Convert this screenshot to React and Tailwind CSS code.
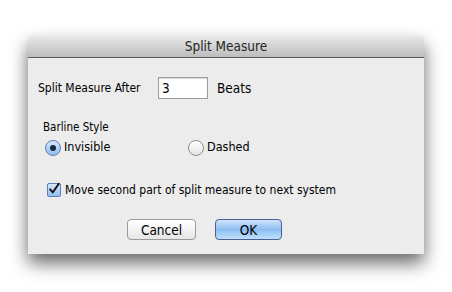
import React from 'react';

const font = { fontFamily: '"DejaVu Sans Condensed", "DejaVu Sans", "Liberation Sans", sans-serif' };

const Radio = ({ checked, label }) => (
  <label className="flex items-center gap-[3px]">
    <span
      className={
        'flex h-[16px] w-[16px] items-center justify-center rounded-full border ' +
        (checked
          ? 'border-[#5a7fb0] bg-gradient-to-b from-[#d7e8fb] to-[#8fbdef]'
          : 'border-[#8e8e8e] bg-gradient-to-b from-[#ffffff] to-[#e4e4e4]')
      }
    >
      {checked && <span className="h-[6px] w-[6px] rounded-full bg-[#1a2a40]" />}
    </span>
    <span className="text-[12.5px] text-black">{label}</span>
  </label>
);

const App = () => {
  return (
    <div className="flex h-[292px] w-[452px] items-start justify-center bg-white pt-[36px]" style={font}>
      <div className="w-[396px] overflow-hidden rounded-t-[4px] bg-[#ececec] shadow-[0_9px_18px_rgba(0,0,0,0.6)]">
        <div className="flex h-[22px] items-center justify-center border-b border-[#595959] bg-gradient-to-b from-[#e9e9e9] to-[#bdbdbd] text-[13.5px] text-[#262626]">
          Split Measure
        </div>
        <div className="px-[10px] pb-[14px] pt-[19px]">
          <div className="flex items-center">
            <span className="w-[120px] text-[12px] text-black">Split Measure After</span>
            <div className="flex h-[22px] w-[50px] items-center border border-[#9b9b9b] bg-white pl-[3px] text-[13.5px] shadow-[inset_0_1px_1px_rgba(0,0,0,0.15)]">
              3
            </div>
            <span className="ml-[9px] text-[13.5px] text-black">Beats</span>
          </div>

          <div className="mt-[20px] pl-[5px] text-[11.5px] text-black">Barline Style</div>
          <div className="mt-[2px] flex pl-[7px]">
            <div className="w-[143px]">
              <Radio checked label="Invisible" />
            </div>
            <Radio label="Dashed" />
          </div>

          <label className="mt-[24px] flex items-center gap-[4px] pl-[9px]">
            <span className="flex h-[14px] w-[14px] items-center justify-center rounded-[2px] border border-[#5a7fb0] bg-gradient-to-b from-[#d7e8fb] to-[#8fbdef]">
              <svg viewBox="0 0 14 14" className="h-[16px] w-[16px] -mt-[3px]">
                <path d="M2.5 7.5 L5.5 11 L12.5 1" fill="none" stroke="#111" strokeWidth="2.2" strokeLinecap="round" strokeLinejoin="round" />
              </svg>
            </span>
            <span className="text-[12px] text-black">Move second part of split measure to next system</span>
          </label>

          <div className="mt-[20px] flex gap-[19px] pl-[89px]">
            <button className="h-[21px] w-[69px] rounded-[4px] border border-[#9a9a9a] bg-gradient-to-b from-[#ffffff] to-[#e6e6e6] text-[13.5px] text-black">
              Cancel
            </button>
            <button className="h-[21px] w-[67px] rounded-[4px] border border-[#4b5f93] bg-gradient-to-b from-[#cfe3f9] via-[#8cbdf1] to-[#bfe0fb] text-[13.5px] text-black">
              OK
            </button>
          </div>
        </div>
      </div>
    </div>
  );
};

export default App;
